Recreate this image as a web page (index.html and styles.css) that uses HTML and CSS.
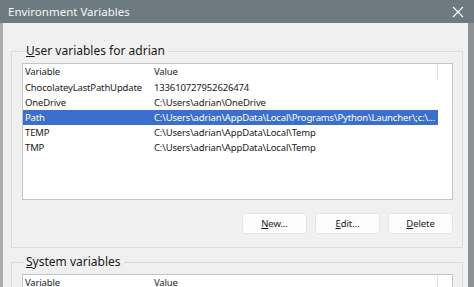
FILE: index.html
```html
<!DOCTYPE html>
<html lang="en">
<head>
    <meta charset="UTF-8">
    <meta name="viewport" content="width=device-width, initial-scale=1.0">
    <title>Environment Variables</title>
    <link rel="stylesheet" href="styles.css">
</head>
<body>

    <div class="window">
        <!-- Title bar -->
        <div class="titlebar">
            <span class="title">Environment Variables</span>
            <svg class="close" width="12" height="12" viewBox="0 0 12 12">
                <path d="M1 1 L11 11 M11 1 L1 11" stroke="#ffffff" stroke-width="1.1" fill="none"/>
            </svg>
        </div>

        <div class="content">
            <!-- User variables -->
            <fieldset class="group">
                <legend><u>U</u>ser variables for adrian</legend>
                <div class="list">
                    <table>
                        <thead>
                            <tr><th class="col-name">Variable</th><th class="col-value">Value</th></tr>
                        </thead>
                        <tbody>
                            <tr><td>ChocolateyLastPathUpdate</td><td>133610727952626474</td></tr>
                            <tr><td>OneDrive</td><td>C:\Users\adrian\OneDrive</td></tr>
                            <tr class="selected"><td>Path</td><td>C:\Users\adrian\AppData\Local\Programs\Python\Launcher\;c:\...</td></tr>
                            <tr><td>TEMP</td><td>C:\Users\adrian\AppData\Local\Temp</td></tr>
                            <tr><td>TMP</td><td>C:\Users\adrian\AppData\Local\Temp</td></tr>
                        </tbody>
                    </table>
                </div>
                <div class="buttons">
                    <button><u>N</u>ew...</button>
                    <button><u>E</u>dit...</button>
                    <button><u>D</u>elete</button>
                </div>
            </fieldset>

            <!-- System variables -->
            <fieldset class="group">
                <legend><u>S</u>ystem variables</legend>
                <div class="list">
                    <table>
                        <thead>
                            <tr><th class="col-name">Variable</th><th class="col-value">Value</th></tr>
                        </thead>
                    </table>
                </div>
            </fieldset>
        </div>
    </div>

</body>
</html>
```

FILE: styles.css
```css
body {
    font-family: "Noto Sans", "Open Sans", sans-serif;
    font-size: 12px;
    margin: 0;
    background-color: #8d9194;
    overflow: hidden;
}
.window {
    width: 474px;
    height: 287px;
    overflow: hidden;
}
.titlebar {
    height: 23px;
    padding: 0 10px 0 8px;
    background-color: #6d7a80;
    color: #f4f6f7;
    display: flex;
    align-items: center;
    justify-content: space-between;
}
.title {
    font-size: 11.5px;
}
.content {
    width: 452px;
    height: 264px;
    margin-right: 6px;
    padding: 20px 5px 0 8px;
    background-color: #f0f0f0;
    border-left: 3px solid #a9acae;
}
.group {
    margin: 0;
    padding: 0 9px 13px 10px;
    border: 1px solid #dcdcdc;
    border-radius: 0;
}
.group + .group {
    margin-top: 6px;
}
legend {
    padding: 0 3px 0 1px;
    margin-left: 3px;
    line-height: 16px;
    color: #1a1a1a;
}
.list {
    margin-top: 4px;
    background-color: #ffffff;
    border: 1px solid #c4c4c4;
    height: 135px;
}
table {
    border-collapse: collapse;
    width: 415px;
    table-layout: fixed;
    font-size: 9.5px;
    letter-spacing: -0.15px;
}
th, td {
    text-align: left;
    font-weight: normal;
    padding: 0 0 0 2px;
    white-space: nowrap;
    overflow: hidden;
    color: #1a1a1a;
}
th {
    height: 16px;
    line-height: 16px;
}
td {
    height: 15px;
    line-height: 15px;
}
.col-name {
    width: 125px;
}
.col-value {
    padding-left: 4px;
    border-right: 1px solid #e3e3e3;
}
td + td {
    padding-left: 4px;
}
.selected td {
    background-color: #3b6fcb;
    color: #ffffff;
}
.buttons {
    display: flex;
    justify-content: flex-end;
    gap: 8px;
    margin-top: 13px;
    padding-right: 0;
}
button {
    width: 65px;
    height: 21px;
    font-family: inherit;
    font-size: 9.5px;
    letter-spacing: -0.1px;
    background-color: #fdfdfd;
    color: #1a1a1a;
    border: 1px solid #e6e6e6;
    border-radius: 3px;
    padding: 0;
}
```
